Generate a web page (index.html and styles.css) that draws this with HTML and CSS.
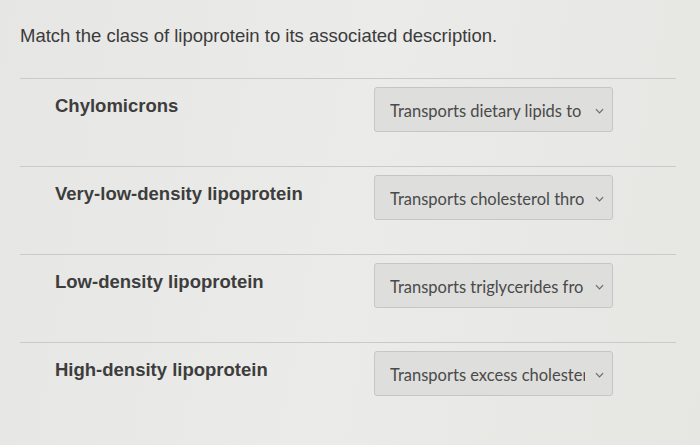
FILE: index.html
```html
<!DOCTYPE html>
<html>
<head>
<meta charset="utf-8">
<link rel="stylesheet" href="styles.css">
</head>
<body>
<div class="page">
  <p class="question">Match the class of lipoprotein to its associated description.</p>
  <div class="rows">
    <div class="row">
      <div class="label">Chylomicrons</div>
      <div class="select"><span class="value">Transports dietary lipids to</span><svg class="chev" viewBox="0 0 10 6" width="9" height="6"><path d="M1 1 L5 5 L9 1" fill="none" stroke="#6a6a6a" stroke-width="1.3"/></svg></div>
    </div>
    <div class="row">
      <div class="label">Very-low-density lipoprotein</div>
      <div class="select"><span class="value">Transports cholesterol thro</span><svg class="chev" viewBox="0 0 10 6" width="9" height="6"><path d="M1 1 L5 5 L9 1" fill="none" stroke="#6a6a6a" stroke-width="1.3"/></svg></div>
    </div>
    <div class="row">
      <div class="label">Low-density lipoprotein</div>
      <div class="select"><span class="value">Transports triglycerides fro</span><svg class="chev" viewBox="0 0 10 6" width="9" height="6"><path d="M1 1 L5 5 L9 1" fill="none" stroke="#6a6a6a" stroke-width="1.3"/></svg></div>
    </div>
    <div class="row">
      <div class="label">High-density lipoprotein</div>
      <div class="select"><span class="value">Transports excess cholesterol to the liver</span><svg class="chev" viewBox="0 0 10 6" width="9" height="6"><path d="M1 1 L5 5 L9 1" fill="none" stroke="#6a6a6a" stroke-width="1.3"/></svg></div>
    </div>
  </div>
</div>
</body>
</html>
```
FILE: styles.css
```css
html, body {
  margin: 0;
  padding: 0;
}
body {
  width: 700px;
  height: 445px;
  overflow: hidden;
  background: linear-gradient(100deg, #e6e6e4 0%, #ebebe9 50%, #e6e6e3 100%);
  font-family: "Liberation Sans", Arial, sans-serif;
}
.page {
  padding: 25px 24px 0 20px;
}
.question {
  margin: 0 0 32px 0;
  font-size: 18.5px;
  line-height: 21px;
  color: #3b3b3b;
}
.row {
  border-top: 1px solid #cacac8;
  height: 88px;
  box-sizing: border-box;
  display: flex;
  align-items: flex-start;
  padding-left: 35px;
}
.label {
  width: 319px;
  margin-top: 16px;
  font-size: 18.5px;
  line-height: 21px;
  font-weight: bold;
  color: #3d3d3d;
}
.select {
  margin-top: 8px;
  width: 239px;
  height: 45px;
  box-sizing: border-box;
  border: 1px solid #c6c6c4;
  border-radius: 3px;
  background: #dededc;
  display: flex;
  align-items: center;
  padding: 3px 0 0 15px;
}
.value {
  width: 195px;
  overflow: hidden;
  white-space: nowrap;
  font-family: Lato, "Liberation Sans", sans-serif;
  font-size: 16.5px;
  color: #4a4a4a;
}
.chev {
  margin-left: 10px;
}
```
